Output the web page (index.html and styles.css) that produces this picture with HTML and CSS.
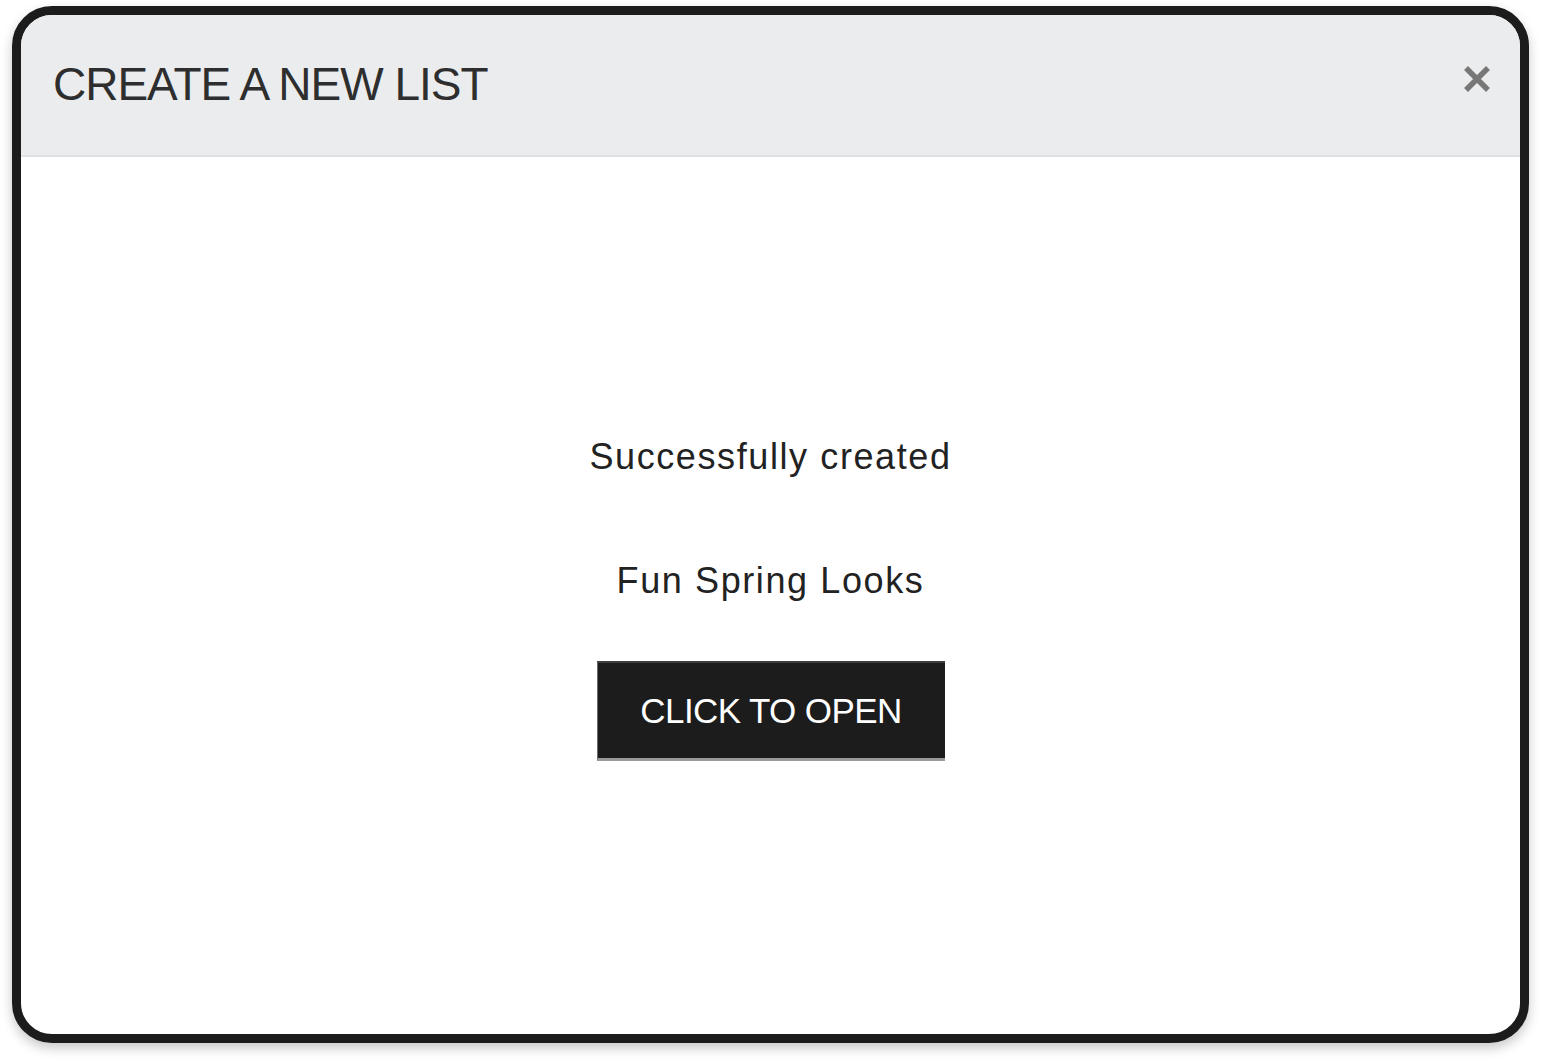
FILE: index.html
```html
<!DOCTYPE html>
<html>
<head>
<meta charset="utf-8">
<link rel="stylesheet" href="styles.css">
</head>
<body>
<div class="frame">
  <div class="header">
    <h1 class="title">CREATE A NEW LIST</h1>
    <button class="close" aria-label="Close">
      <svg viewBox="0 0 26 26" width="26" height="26"><path d="M2 2 L24 24 M24 2 L2 24" stroke="#777" stroke-width="5.5" stroke-linecap="butt" fill="none"/></svg>
    </button>
  </div>
  <div class="content">
    <p class="msg">Successfully created</p>
    <p class="name">Fun Spring Looks</p>
    <button class="open">CLICK TO OPEN</button>
  </div>
</div>
</body>
</html>
```
FILE: styles.css
```css
html, body {
  margin: 0;
  padding: 0;
  background: #ffffff;
}
body {
  padding: 6px 13px 19px 12px;
  font-family: "Liberation Sans", Arial, sans-serif;
}
.frame {
  width: 1499px;
  height: 1019px;
  border: 9px solid #1c1c1c;
  border-radius: 40px;
  overflow: hidden;
  background: #ffffff;
  box-shadow: 0 5px 12px rgba(0, 0, 0, 0.22);
  display: flex;
  flex-direction: column;
}
.header {
  height: 140px;
  flex: none;
  background: #ebecee;
  border-bottom: 2px solid #dfe1e4;
  display: flex;
  align-items: center;
  justify-content: space-between;
  padding: 0 30px 0 32px;
}
.title {
  margin: 0;
  font-weight: normal;
  font-size: 46px;
  letter-spacing: -1px;
  color: #2e2e2e;
  line-height: 50px;
  padding-bottom: 2px;
}
.close {
  border: none;
  background: none;
  padding: 0;
  width: 26px;
  height: 26px;
  margin-bottom: 12px;
  display: block;
}
.close svg { display: block; }
.content {
  flex: 1;
  display: flex;
  flex-direction: column;
  align-items: center;
  padding-top: 280px;
}
.msg, .name {
  margin: 0;
  font-size: 36px;
  line-height: 40px;
  letter-spacing: 1.6px;
  color: #222;
}
.name {
  margin-top: 84px;
}
.open {
  margin-top: 60px;
  width: 348px;
  height: 100px;
  background: #1c1c1c;
  color: #ffffff;
  font-family: "Liberation Sans", Arial, sans-serif;
  font-size: 35px;
  letter-spacing: -0.6px;
  border: none;
  border-top: 2px solid #3c3c3c;
  border-left: 1px solid #6a6a6a;
  border-bottom: 3px solid #9a9a9a;
  padding: 0;
}
```
